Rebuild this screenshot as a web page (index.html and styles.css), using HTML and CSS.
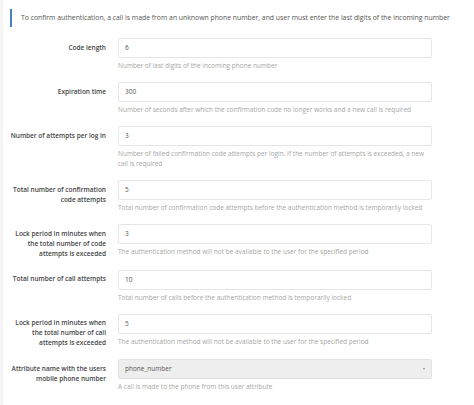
FILE: index.html
```html
<!DOCTYPE html>
<html lang="en">
<head>
<meta charset="utf-8">
<title>Call authentication settings</title>
<link rel="stylesheet" href="styles.css">
</head>
<body>
<div class="page">
  <div class="info">To confirm authentication, a call is made from an unknown phone number, and user must enter the last digits of the incoming number</div>
  <form class="form">
    <div class="row">
      <label class="label">Code length</label>
      <div class="field">
        <div class="input">6</div>
        <div class="help">Number of last digits of the incoming phone number</div>
      </div>
    </div>
    <div class="row">
      <label class="label">Expiration time</label>
      <div class="field">
        <div class="input">300</div>
        <div class="help">Number of seconds after which the confirmation code no longer works and a new call is required</div>
      </div>
    </div>
    <div class="row">
      <label class="label">Number of attempts per log in</label>
      <div class="field">
        <div class="input">3</div>
        <div class="help">Number of failed confirmation code attempts per login. If the number of attempts is exceeded, a new call is required</div>
      </div>
    </div>
    <div class="row">
      <label class="label">Total number of confirmation code attempts</label>
      <div class="field">
        <div class="input">5</div>
        <div class="help">Total number of confirmation code attempts before the authentication method is temporarily locked</div>
      </div>
    </div>
    <div class="row">
      <label class="label">Lock period in minutes when the total number of code attempts is exceeded</label>
      <div class="field">
        <div class="input">3</div>
        <div class="help">The authentication method will not be available to the user for the specified period</div>
      </div>
    </div>
    <div class="row">
      <label class="label">Total number of call attempts</label>
      <div class="field">
        <div class="input">10</div>
        <div class="help">Total number of calls before the authentication method is temporarily locked</div>
      </div>
    </div>
    <div class="row">
      <label class="label">Lock period in minutes when the total number of call attempts is exceeded</label>
      <div class="field">
        <div class="input">5</div>
        <div class="help">The authentication method will not be available to the user for the specified period</div>
      </div>
    </div>
    <div class="row">
      <label class="label">Attribute name with the users mobile phone number</label>
      <div class="field">
        <div class="input select"><span>phone_number</span><span class="caret"></span></div>
        <div class="help">A call is made to the phone from this user attribute</div>
      </div>
    </div>
  </form>
</div>
</body>
</html>
```
FILE: styles.css
```css
html, body {
  margin: 0;
  padding: 0;
  background: #ffffff;
}
body {
  font-family: "Open Sans", "Liberation Sans", sans-serif;
  font-size: 6.5px;
  color: #333333;
}
.page {
  border-left: 3px solid #f5f5f5;
  padding: 9px 0 0 7px;
  min-height: 396px;
}
.info {
  border-left: 2px solid #4a7fc3;
  padding-left: 9px;
  line-height: 18px;
  height: 18px;
  color: #555555;
  font-size: 6.85px;
  white-space: nowrap;
}
.form {
  margin-top: 11px;
  display: flex;
  flex-direction: column;
}
.row {
  display: grid;
  grid-template-columns: 96px 314px;
  column-gap: 12px;
  margin-bottom: 11px;
  align-items: start;
}
.label {
  text-align: right;
  font-weight: 600;
  line-height: 10px;
  padding-top: 4.5px;
  color: #444444;
}
.field {
  display: flex;
  flex-direction: column;
}
.input {
  box-sizing: border-box;
  height: 20px;
  border: 1px solid #e6e6e6;
  border-radius: 2px;
  padding: 0 6px;
  line-height: 18px;
  color: #555555;
  background: #ffffff;
}
.select {
  background: #eeeeee;
  border-color: #e2e2e2;
  display: flex;
  justify-content: space-between;
  align-items: center;
}
.caret {
  width: 0;
  height: 0;
  border-left: 1.5px solid transparent;
  border-right: 1.5px solid transparent;
  border-top: 2px solid #888888;
}
.help {
  margin-top: 3px;
  line-height: 10px;
  color: #a6a6a6;
}
```
